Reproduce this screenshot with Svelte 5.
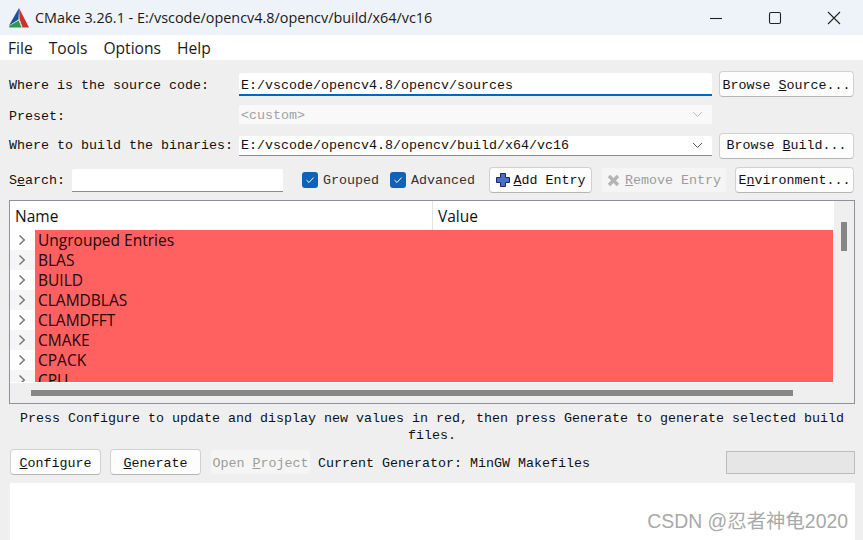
<script>
  const groups = ["Ungrouped Entries", "BLAS", "BUILD", "CLAMDBLAS", "CLAMDFFT", "CMAKE", "CPACK", "CPU"];
</script>

<div class="window">
  <header class="titlebar">
    <svg class="logo" viewBox="0 0 20 20" width="20" height="20">
      <path d="M10 0 L0 17.5 L9.5 11.5 Z" fill="#1c4f9c" />
      <path d="M10 0 L20 19.5 L13.5 19.5 L10.5 11 Z" fill="#d22f27" />
      <path d="M0 18 L9.6 12.4 L12.6 19.5 L0.5 19.5 Z" fill="#2d9a4a" />
      <path d="M9.6 12 L10.6 11.3 L13.4 19.5 L12.6 19.5 Z" fill="#c9d4c8" />
    </svg>
    <span class="title">CMake 3.26.1 - E:/vscode/opencv4.8/opencv/build/x64/vc16</span>
    <div class="winbtns">
      <svg width="14" height="14" viewBox="0 0 14 14"><path d="M1 7.5 H13" stroke="#222" stroke-width="1.1" /></svg>
      <svg width="14" height="14" viewBox="0 0 14 14"><rect x="1.5" y="1.5" width="11" height="11" rx="1.5" fill="none" stroke="#222" stroke-width="1.1" /></svg>
      <svg width="14" height="14" viewBox="0 0 14 14"><path d="M1 1 L13 13 M13 1 L1 13" stroke="#222" stroke-width="1.1" /></svg>
    </div>
  </header>

  <nav class="menubar">
    <span>File</span><span>Tools</span><span>Options</span><span>Help</span>
  </nav>

  <main class="body">
    <div class="paths">
      <span class="lbl low">Where is the source code:</span>
      <div class="field focus">E:/vscode/opencv4.8/opencv/sources</div>
      <button class="btn wide low"><span>Browse <u>S</u>ource...</span></button>

      <span class="lbl low">Preset:</span>
      <div class="field combo off">
        &lt;custom&gt;
        <svg width="11" height="7" viewBox="0 0 11 7"><path d="M1 1 L5.5 5.5 L10 1" fill="none" stroke="#bbb" /></svg>
      </div>
      <div></div>

      <span class="lbl">Where to build the binaries:</span>
      <div class="field combo">
        E:/vscode/opencv4.8/opencv/build/x64/vc16
        <svg width="11" height="7" viewBox="0 0 11 7"><path d="M1 1 L5.5 5.5 L10 1" fill="none" stroke="#555" /></svg>
      </div>
      <button class="btn wide"><span>Browse <u>B</u>uild...</span></button>
    </div>

    <div class="searchrow">
      <span>S<u>e</u>arch:</span>
      <div class="field search"></div>
      <span class="check">
        <svg width="16" height="16" viewBox="0 0 16 16"><rect width="16" height="16" rx="3" fill="#0f62b8" /><path d="M4.5 8.2 L7 10.5 L11.5 5.6" fill="none" stroke="#fff" /></svg>
        Grouped
      </span>
      <span class="check">
        <svg width="16" height="16" viewBox="0 0 16 16"><rect width="16" height="16" rx="3" fill="#0f62b8" /><path d="M4.5 8.2 L7 10.5 L11.5 5.6" fill="none" stroke="#fff" /></svg>
        Advanced
      </span>
      <button class="btn add">
        <svg width="14" height="14" viewBox="0 0 14 14"><path d="M4.5 .5 H9.5 V4.5 H13.5 V9.5 H9.5 V13.5 H4.5 V9.5 H.5 V4.5 H4.5 Z" fill="#4a6fc4" stroke="#14246e" /></svg>
        <span><u>A</u>dd Entry</span>
      </button>
      <button class="btn remove" disabled>
        <svg width="13" height="13" viewBox="0 0 13 13"><path d="M2 2 L11 11 M11 2 L2 11" stroke="#b4b4b4" stroke-width="3.4" /></svg>
        <span><u>R</u>emove Entry</span>
      </button>
      <button class="btn env"><span>E<u>n</u>vironment...</span></button>
    </div>

    <section class="tree">
      <div class="treemain">
        <div class="thead">
          <div class="hname">Name</div>
          <div class="hvalue">Value</div>
        </div>
        <div class="rows">
          {#each groups as g, i}
            <div class="row" class:alt={i % 2 === 1}>
              <div class="arrow">
                <svg width="8" height="12" viewBox="0 0 8 12"><path d="M1.5 1.5 L6.2 6 L1.5 10.5" fill="none" stroke="#777" stroke-width="1.5" /></svg>
              </div>
              <div class="cell">{g}</div>
            </div>
          {/each}
        </div>
        <div class="hscroll"><div class="hthumb"></div></div>
      </div>
      <div class="vscroll"><div class="vthumb"></div></div>
    </section>

    <p class="msg">Press Configure to update and display new values in red, then press Generate to generate selected build files.</p>

    <div class="actions">
      <button class="btn act"><span><u>C</u>onfigure</span></button>
      <button class="btn act"><span><u>G</u>enerate</span></button>
      <button class="btn open" disabled><span>Open <u>P</u>roject</span></button>
      <span class="gen">Current Generator: MinGW Makefiles</span>
      <div class="progress"></div>
    </div>

    <div class="output">
      <span class="mark">CSDN @忍者神龟2020</span>
    </div>
  </main>
</div>

<style>
  :global(body) {
    margin: 0;
    background: #efefef;
  }

  .window {
    width: 863px;
    height: 540px;
    overflow: hidden;
    display: flex;
    flex-direction: column;
    font-family: "Liberation Mono", monospace;
    font-size: 13.33px;
    color: #111;
    background: #efefef;
  }

  .titlebar {
    height: 35px;
    flex: none;
    display: flex;
    align-items: center;
    padding: 0 0 0 9px;
    background: #eef3f9;
    font-family: "Open Sans", "Noto Sans", sans-serif;
    font-size: 14.4px;
    color: #1a1a1a;
  }

  .logo {
    margin-right: 6px;
  }

  .title {
    flex: 1;
  }

  .winbtns {
    display: flex;
    gap: 45px;
    padding-right: 22px;
  }

  .menubar {
    height: 25px;
    flex: none;
    display: flex;
    align-items: center;
    gap: 16px;
    padding-left: 8px;
    background: #fff;
    font-family: "Open Sans", "Noto Sans", sans-serif;
    font-size: 15.6px;
    color: #1a1a1a;
  }

  .body {
    flex: 1;
    display: flex;
    flex-direction: column;
    padding: 11px 8px 0 9px;
    min-height: 0;
  }

  .paths {
    display: grid;
    grid-template-columns: 223px 473px 135px;
    column-gap: 7px;
    grid-template-rows: 26px 20px 25px;
    row-gap: 8px;
    align-items: center;
  }

  .paths > * {
    white-space: nowrap;
  }

  .lbl.low {
    padding-top: 2px;
  }

  .btn.low {
    padding-top: 2px;
  }

  .field {
    height: 23px;
    box-sizing: border-box;
    background: #fff;
    padding: 0 2px;
    line-height: 22px;
    border-bottom: 1px solid #8a8a8a;
    border-radius: 2px 2px 0 0;
    position: relative;
    white-space: nowrap;
  }

  .field.focus {
    border-bottom: 2px solid #0067c0;
    line-height: 25px;
  }

  .combo {
    height: 20px;
    line-height: 19px;
  }

  .combo svg {
    position: absolute;
    right: 9px;
    top: 6px;
  }

  .combo.off {
    background: #f9f9f9;
    border-bottom: 1px solid #f0f0f0;
    color: #a2a2a2;
    line-height: 21px;
  }

  .searchrow {
    display: flex;
    align-items: center;
    height: 26px;
    margin-top: 9px;
    flex: none;
  }

  .search {
    width: 211px;
    margin-left: 7px;
    margin-right: 19px;
  }

  .check {
    display: flex;
    align-items: center;
    gap: 5px;
    margin-right: 11px;
    color: #333;
  }

  .btn {
    box-sizing: border-box;
    font: inherit;
    color: #111;
    height: 26px;
    padding: 0;
    background: #fdfdfd;
    border: 1px solid #d0d0d0;
    border-bottom-color: #b5b5b5;
    border-radius: 4px;
    white-space: nowrap;
    display: inline-flex;
    align-items: center;
    justify-content: center;
  }

  .btn[disabled] {
    background: #f5f5f5;
    border-color: #f0f0f0;
    color: #9c9c9c;
  }

  .wide {
    width: 135px;
  }

  .add {
    width: 103px;
    gap: 4px;
    margin-left: 3px;
  }

  .remove {
    width: 126px;
    gap: 5px;
    margin-left: 9px;
  }

  .env {
    width: 119px;
    margin-left: 8px;
  }

  .tree {
    flex: none;
    box-sizing: border-box;
    height: 204px;
    width: 846px;
    margin-top: 7px;
    border: 1px solid #8f8f9d;
    display: flex;
    background: #efefef;
    font-family: "Open Sans", "Noto Sans", sans-serif;
    font-size: 15.5px;
  }

  .treemain {
    flex: 1;
    min-width: 0;
    display: flex;
    flex-direction: column;
  }

  .thead {
    height: 29px;
    flex: none;
    display: flex;
    background: #fff;
    line-height: 31px;
    color: #111;
  }

  .hname {
    width: 417px;
    padding-left: 5px;
    border-right: 1px solid #e4e4e4;
  }

  .hvalue {
    padding-left: 5px;
  }

  .rows {
    flex: none;
    height: 152px;
    overflow: hidden;
    margin-right: 1px;
    background: #fff;
  }

  .row {
    display: flex;
    height: 20px;
  }

  .arrow {
    width: 25px;
    flex: none;
    display: flex;
    align-items: center;
    justify-content: center;
    padding-right: 1px;
    box-sizing: border-box;
  }

  .alt .arrow {
    background: #f5f5f5;
  }

  .cell {
    flex: 1;
    background: #ff6161;
    padding-left: 3px;
    line-height: 20px;
    color: #1a0808;
  }

  .hscroll {
    flex: 1;
    padding: 7px 41px 0 21px;
    border-top: 1px solid #fff;
  }

  .hthumb {
    height: 6px;
    background: #868686;
  }

  .vscroll {
    width: 20px;
    flex: none;
    padding: 21px 0 0 7px;
    box-sizing: border-box;
  }

  .vthumb {
    width: 6px;
    height: 29px;
    background: #868686;
  }

  .msg {
    margin: 6px 0 0;
    padding: 0 8px;
    flex: none;
    text-align: center;
    line-height: 17px;
    height: 34px;
  }

  .actions {
    display: flex;
    align-items: center;
    height: 26px;
    margin-top: 5px;
    flex: none;
    padding-left: 1px;
  }

  .actions .btn {
    padding-top: 2px;
  }

  .act {
    width: 91px;
    margin-right: 9px;
  }

  .open {
    width: 101px;
  }

  .gen {
    margin-left: 7px;
    flex: 1;
    padding-top: 2px;
  }

  .progress {
    width: 129px;
    height: 23px;
    box-sizing: border-box;
    background: #e6e6e6;
    border: 1px solid #bcbcbc;
  }

  .output {
    flex: 1;
    margin: 8px 0 0 1px;
    background: #fff;
    position: relative;
  }

  .mark {
    position: absolute;
    right: 7px;
    top: 22px;
    font-family: "Liberation Sans", "Noto Sans CJK SC", sans-serif;
    font-size: 19.4px;
    color: #a9a9a9;
    white-space: nowrap;
  }
</style>
